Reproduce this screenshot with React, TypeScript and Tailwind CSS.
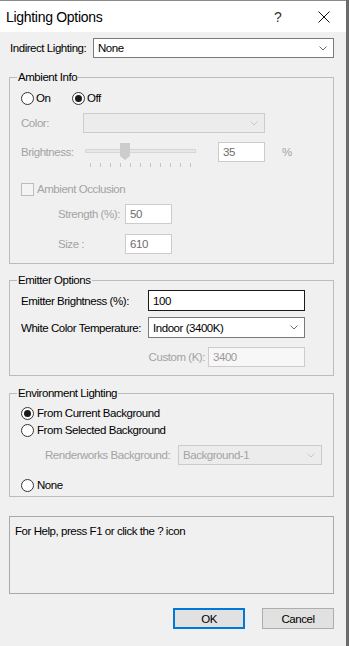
import React from 'react'

const DIS = 'text-[#a3a3a3]'

function Chevron({ disabled }: { disabled?: boolean }) {
  return (
    <svg width="8" height="5" viewBox="0 0 8 5" className="shrink-0">
      <path d="M0.5 0.5 L4 4 L7.5 0.5" fill="none" stroke={disabled ? '#c8c8c8' : '#6a6a6a'} strokeWidth="1" />
    </svg>
  )
}

function Select({ value, width, height = 20, disabled }: { value: string; width: number; height?: number; disabled?: boolean }) {
  return (
    <div
      className={
        disabled
          ? 'flex items-center justify-between border border-[#cccccc] bg-[#ececec] pl-[4px] pr-[6px] text-[#a3a3a3]'
          : 'flex items-center justify-between border border-[#7a7a7a] bg-white pl-[4px] pr-[6px] text-black'
      }
      style={{ width, height }}
    >
      <span>{value}</span>
      <Chevron disabled={disabled} />
    </div>
  )
}

function Field({ value, width, height = 20, tone = 'dis' }: { value: string; width: number; height?: number; tone?: 'dis' | 'focus' | 'grey' }) {
  const cls =
    tone === 'focus'
      ? 'border border-[#1a1a1a] bg-white text-black'
      : tone === 'grey'
        ? 'border border-[#cccccc] bg-[#f7f7f7] text-[#9a9a9a]'
        : 'border border-[#cccccc] bg-white text-[#6d6d6d]'
  return (
    <div className={`flex items-center pl-[4px] ${cls}`} style={{ width, height }}>
      {value}
    </div>
  )
}

function Radio({ checked }: { checked?: boolean }) {
  return (
    <span className="flex h-[13px] w-[13px] shrink-0 items-center justify-center rounded-full border border-[#333333] bg-white">
      {checked && <span className="h-[7px] w-[7px] rounded-full bg-[#1a1a1a]" />}
    </span>
  )
}

function Slider() {
  const ticks = Array.from({ length: 11 }, (_, i) => 5 + i * 10)
  return (
    <div className="h-[20px] w-[133px]">
      <svg width="112" height="20" viewBox="0 0 112 20" className="overflow-visible">
        <rect x="0.5" y="7.5" width="110" height="3" fill="#e7e7e7" stroke="#d6d6d6" />
        <polygon points="35,1 45,1 45,14 40,18 35,14" fill="#cccccc" />
        {ticks.map((x) => (
          <line key={x} x1={x + 0.5} y1="21" x2={x + 0.5} y2="25" stroke="#c4c4c4" />
        ))}
      </svg>
    </div>
  )
}

export default function App() {
  return (
    <div className="flex h-[646px] w-[349px] bg-[#f0f0f0] font-['Liberation_Sans',Arial,sans-serif] text-[11.5px] leading-[14px] tracking-[-0.45px] text-black">
      <div className="flex w-[346px] flex-col">
        {/* Title bar */}
        <div className="flex h-[32px] items-center border-t border-[#8a8a8a] bg-white">
          <span className="flex-1 pl-[6px] text-[14px] tracking-[-0.3px]">Lighting Options</span>
          <span className="flex w-[46px] justify-center text-[14px] tracking-normal text-[#333]">?</span>
          <span className="flex w-[45px] justify-center">
            <svg width="12" height="12" viewBox="0 0 12 12">
              <path d="M0.5 0.5 L11.5 11.5 M11.5 0.5 L0.5 11.5" stroke="#111" strokeWidth="1" />
            </svg>
          </span>
        </div>

        {/* Indirect lighting */}
        <div className="mt-[6px] flex h-[20px] items-center pl-[10px]">
          <span className="w-[83px]">Indirect Lighting:</span>
          <Select value="None" width={241} />
        </div>

        {/* Ambient Info */}
        <fieldset className="ml-[9px] mt-[12px] w-[325px] border border-[#bcbcbc]">
          <legend className="ml-[7px] px-[1px] leading-[14px]">Ambient Info</legend>
          <div className="flex flex-col pb-[9px] pl-[11px]">
            <div className="mt-[7px] flex h-[14px] items-center">
              <div className="flex w-[51px] items-center gap-[2px]">
                <Radio />
                <span>On</span>
              </div>
              <div className="flex items-center gap-[2px]">
                <Radio checked />
                <span>Off</span>
              </div>
            </div>
            <div className="mt-[8px] flex h-[20px] items-center">
              <span className={`w-[62px] ${DIS}`}>Color:</span>
              <Select value="" width={182} disabled />
            </div>
            <div className="mt-[9px] flex h-[20px] items-center">
              <span className={`w-[64px] ${DIS}`}>Brightness:</span>
              <Slider />
              <Field value="35" width={47} />
              <span className={`ml-[17px] ${DIS}`}>%</span>
            </div>
            <div className="mt-[20px] flex h-[14px] items-center">
              <span className="h-[13px] w-[13px] border border-[#bcbcbc] bg-[#f4f4f4]" />
              <span className={`ml-[3px] ${DIS}`}>Ambient Occlusion</span>
            </div>
            <div className="mt-[8px] flex h-[20px] items-center pl-[37px]">
              <span className={`w-[67px] ${DIS}`}>Strength (%):</span>
              <Field value="50" width={47} />
            </div>
            <div className="mt-[10px] flex h-[20px] items-center pl-[37px]">
              <span className={`w-[67px] ${DIS}`}>Size :</span>
              <Field value="610" width={47} />
            </div>
          </div>
        </fieldset>

        {/* Emitter Options */}
        <fieldset className="ml-[9px] mt-[9px] w-[325px] border border-[#bcbcbc]">
          <legend className="ml-[7px] px-[1px] leading-[14px]">Emitter Options</legend>
          <div className="flex flex-col pb-[8px] pl-[11px]">
            <div className="mt-[3px] flex h-[21px] items-center">
              <span className="w-[127px]">Emitter Brightness (%):</span>
              <Field value="100" width={157} height={21} tone="focus" />
            </div>
            <div className="mt-[6px] flex h-[21px] items-center">
              <span className="w-[127px]">White Color Temperature:</span>
              <Select value="Indoor (3400K)" width={157} height={21} />
            </div>
            <div className="mt-[9px] flex h-[20px] items-center">
              <span className={`w-[187px] pr-[3px] text-right ${DIS}`}>Custom (K):</span>
              <Field value="3400" width={97} tone="grey" />
            </div>
          </div>
        </fieldset>

        {/* Environment Lighting */}
        <fieldset className="ml-[9px] mt-[10px] w-[325px] border border-[#bcbcbc]">
          <legend className="ml-[7px] px-[1px] leading-[14px]">Environment Lighting</legend>
          <div className="flex flex-col pb-[4px] pl-[11px]">
            <div className="mt-[6px] flex h-[14px] items-center gap-[3px]">
              <Radio checked />
              <span>From Current Background</span>
            </div>
            <div className="mt-[3px] flex h-[14px] items-center gap-[3px]">
              <Radio />
              <span>From Selected Background</span>
            </div>
            <div className="mt-[8px] flex h-[20px] items-center pl-[24px]">
              <span className={`w-[133px] ${DIS}`}>Renderworks Background:</span>
              <Select value="Background-1" width={144} disabled />
            </div>
            <div className="mt-[13px] flex h-[14px] items-center gap-[3px]">
              <Radio />
              <span>None</span>
            </div>
          </div>
        </fieldset>

        {/* Help */}
        <div className="ml-[9px] mt-[19px] h-[78px] w-[325px] border border-[#a9a9a9] pl-[5px] pt-[7px]">
          For Help, press F1 or click the ? icon
        </div>

        {/* Buttons */}
        <div className="mt-[14px] flex justify-end gap-[17px] pr-[12px]">
          <button className="flex h-[21px] w-[72px] items-center justify-center border-2 border-[#0078d7] bg-[#e1e1e1]">OK</button>
          <button className="flex h-[21px] w-[72px] items-center justify-center border border-[#adadad] bg-[#e1e1e1]">Cancel</button>
        </div>
      </div>
      <div className="w-[3px] bg-[#6b6b6b]" />
    </div>
  )
}
